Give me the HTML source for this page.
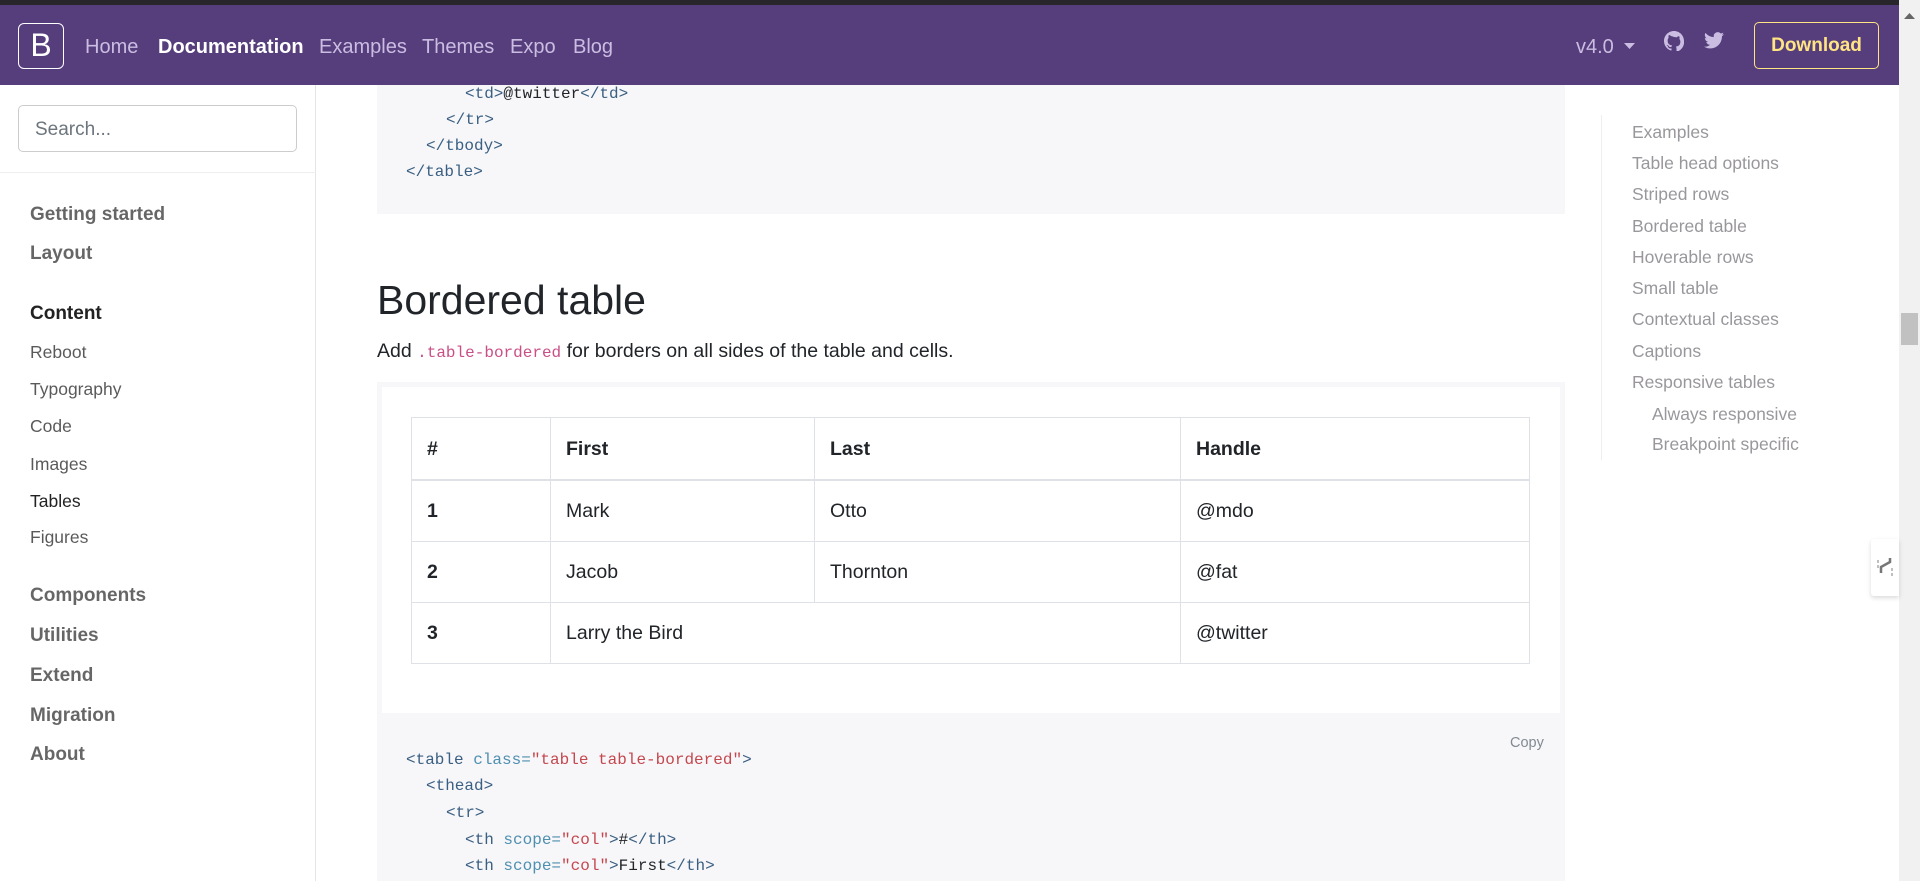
<!DOCTYPE html>
<html><head><meta charset="utf-8"><style>
*{box-sizing:border-box;margin:0;padding:0}
body{width:1920px;height:881px;overflow:hidden;background:#fff;font-family:"Liberation Sans",sans-serif;color:#212529;position:relative}
.a{position:absolute;white-space:nowrap}
.topbar{left:0;top:0;width:1920px;height:5px;background:#28252b}
.nav{left:0;top:5px;width:1899px;height:80px;background:#563d7c}
.nl{font-size:20px;color:#cbbde2;top:35px;line-height:24px}
.logo{left:18px;top:23px;width:46px;height:46px;border:1.5px solid #fff;border-radius:6px;color:#fff;font-size:32px;text-align:center;line-height:43px}
.dl{left:1754px;top:22px;width:125px;height:47px;border:1.5px solid #ffe484;border-radius:5px;color:#ffe484;font-size:19px;font-weight:bold;text-align:center;line-height:46px}
.side{left:0;top:85px;width:316px;height:796px;border-right:1px solid #e5e5e5;background:#fff}
.search{left:18px;top:105px;width:279px;height:47px;border:1px solid #ccc;border-radius:5px;font-size:19px;color:#6c757d;padding:12px 16px;line-height:24px}
.sl{left:30px;color:rgba(0,0,0,.65);line-height:24px}
.t{font-size:19px;font-weight:bold;color:rgba(0,0,0,.6)}
.s{font-size:17.5px}
.code{left:377px;width:1188px;background:#f7f7f9;font-family:"Liberation Mono",monospace;font-size:16px}
.cl{position:absolute;white-space:pre;line-height:26px}
.nt{color:#3a5f82}.na{color:#4f8fb0}.st{color:#c4484f}
.toc{left:1632px;font-size:17.5px;color:#99979c;line-height:24px}
table{border-collapse:collapse;font-size:19.5px}
td,th{border:1px solid #dee2e6;padding:15px;text-align:left;line-height:30px;height:61px}
th{border-bottom:2px solid #dee2e6}
</style></head><body>
<div class="a topbar"></div>
<div class="a nav"></div>
<div class="a logo">B</div>
<div class="a nl" style="left:85px">Home</div>
<div class="a nl" style="left:158px;color:#fff;font-weight:bold">Documentation</div>
<div class="a nl" style="left:319px">Examples</div>
<div class="a nl" style="left:422px">Themes</div>
<div class="a nl" style="left:510px">Expo</div>
<div class="a nl" style="left:573px">Blog</div>
<div class="a nl" style="left:1576px">v4.0</div>
<svg class="a" style="left:1624px;top:43px" width="11" height="6"><path d="M0 0h11L5.5 6z" fill="#cbbde2"/></svg>
<svg class="a" style="left:1664px;top:31px" width="20" height="20" viewBox="0 0 16 16"><path fill="#cbbde2" d="M8 0C3.58 0 0 3.58 0 8c0 3.54 2.290 6.53 5.47 7.59.4.07.55-.17.55-.38v-1.33c-2.23.48-2.7-1.070-2.7-1.07-.36-.92-.89-1.170-.89-1.17-.73-.5.05-.49.05-.49.8.06 1.23.83 1.23.83.72 1.23 1.87.87 2.33.67.07-.52.28-.87.5-1.07-1.78-.2-3.65-.89-3.65-3.95 0-.87.31-1.59.83-2.15-.08-.2-.36-1.02.08-2.12 0 0 .67-.21 2.2.82A7.6 7.6 0 0 1 8 4.8c.68 0 1.36.09 2 .27 1.53-1.04 2.2-.82 2.2-.82.44 1.1.16 1.92.08 2.12.51.56.82 1.27.82 2.15 0 3.07-1.87 3.75-3.65 3.95.29.25.54.73.54 1.48v2.2c0 .21.15.46.55.38A8 8 0 0 0 16 8c0-4.420-3.58-8-8-8z"/></svg>
<svg class="a" style="left:1704px;top:32px" width="20" height="17" viewBox="0 0 24 20"><path fill="#cbbde2" d="M24 2.4a9.8 9.8 0 0 1-2.8.8A4.9 4.9 0 0 0 23.3.4a9.9 9.9 0 0 1-3.1 1.2A4.9 4.9 0 0 0 11.8 6 14 14 0 0 1 1.7.9a4.9 4.9 0 0 0 1.5 6.6A4.9 4.9 0 0 1 1 6.9a4.9 4.9 0 0 0 3.9 4.8 4.9 4.9 0 0 1-2.2.1 4.9 4.9 0 0 0 4.6 3.4A9.9 9.9 0 0 1 0 17.3 14 14 0 0 0 7.5 19.5c9.1 0 14-7.5 14-14v-.6A10 10 0 0 0 24 2.4z"/></svg>
<div class="a dl">Download</div>
<div class="a" style="left:1899px;top:0;width:21px;height:881px;background:#f1f1f1"></div>
<svg class="a" style="left:1904px;top:13px" width="11" height="6"><path d="M0 6h11L5.5 0z" fill="#666"/></svg>
<div class="a" style="left:1901px;top:313px;width:17px;height:32px;background:#c1c1c1"></div>

<div class="a side"></div>
<div class="a search">Search...</div>
<div class="a" style="left:0;top:172px;width:316px;height:1px;background:#eee"></div>
<div class="a sl t" style="top:203px">Getting started</div>
<div class="a sl t" style="top:242px">Layout</div>
<div class="a sl t" style="top:302px;color:#222">Content</div>
<div class="a sl s" style="top:340px">Reboot</div>
<div class="a sl s" style="top:377px">Typography</div>
<div class="a sl s" style="top:414px">Code</div>
<div class="a sl s" style="top:452px">Images</div>
<div class="a sl s" style="top:489px;color:#222">Tables</div>
<div class="a sl s" style="top:525px">Figures</div>
<div class="a sl t" style="top:584px">Components</div>
<div class="a sl t" style="top:624px">Utilities</div>
<div class="a sl t" style="top:664px">Extend</div>
<div class="a sl t" style="top:704px">Migration</div>
<div class="a sl t" style="top:743px">About</div>

<div class="a code" style="top:85px;height:129px">
<div class="cl" style="left:88px;top:-4px"><span class="nt">&lt;td&gt;</span>@twitter<span class="nt">&lt;/td&gt;</span></div>
<div class="cl" style="left:69px;top:22px"><span class="nt">&lt;/tr&gt;</span></div>
<div class="cl" style="left:49px;top:48px"><span class="nt">&lt;/tbody&gt;</span></div>
<div class="cl" style="left:29px;top:74px"><span class="nt">&lt;/table&gt;</span></div>
</div>
<div class="a" style="left:377px;top:276px;font-size:41px;line-height:48px;color:#212529">Bordered table</div>
<div class="a" style="left:377px;top:338px;font-size:19.5px;line-height:26px">Add <span style="font-family:'Liberation Mono',monospace;font-size:16px;color:#c94f87">.table-bordered</span> for borders on all sides of the table and cells.</div>

<div class="a" style="left:377px;top:382px;width:1188px;height:331px;border:5px solid #f7f7f9;border-bottom:0"></div>
<table class="a" style="left:411px;top:417px;width:1119px">
<tr><th style="width:139px;padding-top:16px">#</th><th style="width:264px;padding-top:16px">First</th><th style="width:366px;padding-top:16px">Last</th><th style="padding-top:16px">Handle</th></tr>
<tr><th style="border-bottom:1px solid #dee2e6">1</th><td>Mark</td><td>Otto</td><td>@mdo</td></tr>
<tr><th style="border-bottom:1px solid #dee2e6">2</th><td>Jacob</td><td>Thornton</td><td>@fat</td></tr>
<tr><th style="border-bottom:1px solid #dee2e6">3</th><td colspan="2">Larry the Bird</td><td>@twitter</td></tr>
</table>

<div class="a code" style="top:713px;height:168px">
<div class="a" style="left:1133px;top:22px;font-family:'Liberation Sans',sans-serif;font-size:14.5px;color:#818a91">Copy</div>
<div class="cl" style="left:29px;top:34px"><span class="nt">&lt;table</span> <span class="na">class=</span><span class="st">"table table-bordered"</span><span class="nt">&gt;</span></div>
<div class="cl" style="left:49px;top:60px"><span class="nt">&lt;thead&gt;</span></div>
<div class="cl" style="left:69px;top:87px"><span class="nt">&lt;tr&gt;</span></div>
<div class="cl" style="left:88px;top:114px"><span class="nt">&lt;th</span> <span class="na">scope=</span><span class="st">"col"</span><span class="nt">&gt;</span>#<span class="nt">&lt;/th&gt;</span></div>
<div class="cl" style="left:88px;top:140px"><span class="nt">&lt;th</span> <span class="na">scope=</span><span class="st">"col"</span><span class="nt">&gt;</span>First<span class="nt">&lt;/th&gt;</span></div>
</div>

<div class="a" style="left:1601px;top:115px;width:1px;height:345px;background:#eee"></div>
<div class="a toc" style="top:120px">Examples</div>
<div class="a toc" style="top:151px">Table head options</div>
<div class="a toc" style="top:182px">Striped rows</div>
<div class="a toc" style="top:214px">Bordered table</div>
<div class="a toc" style="top:245px">Hoverable rows</div>
<div class="a toc" style="top:276px">Small table</div>
<div class="a toc" style="top:307px">Contextual classes</div>
<div class="a toc" style="top:339px">Captions</div>
<div class="a toc" style="top:370px">Responsive tables</div>
<div class="a toc" style="top:402px;left:1652px">Always responsive</div>
<div class="a toc" style="top:432px;left:1652px">Breakpoint specific</div>

<div class="a" style="left:1871px;top:539px;width:28px;height:57px;background:#fff;box-shadow:0 2px 5px rgba(0,0,0,.15);border-radius:3px 0 0 3px"></div>
<svg class="a" style="left:1876px;top:556px" width="18" height="22"><path d="M5 17V11l9-5v-4" stroke="#777" stroke-width="2.5" fill="none"/><path d="M2 4v3M2 9v3M16 12v3M16 17v3" stroke="#aaa" stroke-width="1.5"/></svg>
</body></html>
